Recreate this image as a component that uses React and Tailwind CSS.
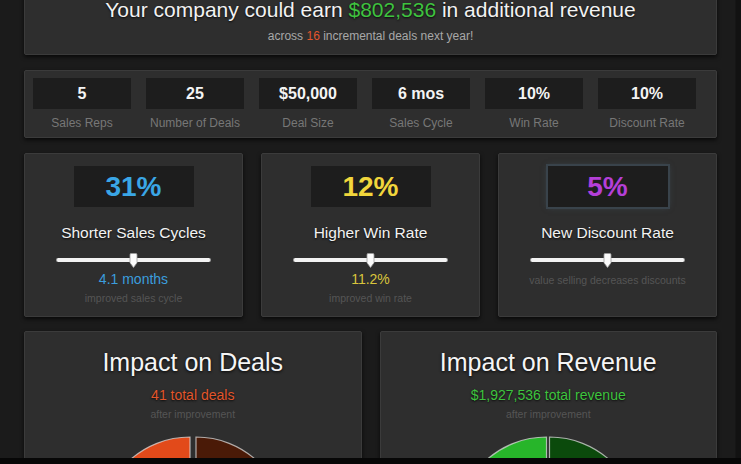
import React from "react";

const stats = [
  ["5", "Sales Reps"],
  ["25", "Number of Deals"],
  ["$50,000", "Deal Size"],
  ["6 mos", "Sales Cycle"],
  ["10%", "Win Rate"],
  ["10%", "Discount Rate"],
];

function Slider() {
  return (
    <div className="relative mx-auto h-[16px] w-[155px]">
      <div className="absolute left-0 right-0 top-[6px] h-[4px] rounded-full border-x border-[#9a9a9a] bg-[#f3f3f3]" />
      <svg
        className="absolute left-[73px] top-[1px]"
        width="9"
        height="16"
        viewBox="0 0 9 16"
      >
        <path
          d="M1 1.6 Q1 0.5 2.1 0.5 H6.9 Q8 0.5 8 1.6 V9.8 L4.5 14.6 L1 9.8 Z"
          fill="#fbfbfb"
          stroke="#9c9c9c"
          strokeWidth="0.8"
        />
      </svg>
    </div>
  );
}

function MetricCard({ value, valueColor, title, sub, subColor, note, focused }) {
  return (
    <div className="flex h-[164px] flex-col items-center rounded-[2px] border border-[#3b3b3b] bg-[#2e2e2e] pt-[12px] shadow-[0_2px_4px_rgba(0,0,0,0.7)]">
      <div
        className={
          "flex h-[41px] w-[120px] items-center justify-center bg-[#1d1d1d] " +
          (focused ? "ring-2 ring-[#39434b] shadow-[0_0_6px_rgba(80,110,130,0.5)]" : "")
        }
      >
        <span className={"text-[28px] font-bold leading-none " + valueColor}>{value}</span>
      </div>
      <div className="mt-[17px] text-[15.5px] leading-[18px] text-[#f2f2f2] [text-shadow:0_1px_2px_rgba(0,0,0,0.8)]">
        {title}
      </div>
      <div className="mt-[10px] w-full">
        <Slider />
      </div>
      {sub ? (
        <>
          <div className={"mt-[3px] text-[14px] leading-[16px] " + subColor}>{sub}</div>
          <div className="mt-[5px] text-[10.5px] leading-[12px] text-[#555555]">{note}</div>
        </>
      ) : (
        <div className="mt-[5px] text-[10.5px] leading-[14px] text-[#555555]">{note}</div>
      )}
    </div>
  );
}

function Pie({ leftFill, rightFill, gap }) {
  const r = 90;
  return (
    <svg width="190" height="190" viewBox="-95 -95 190 190" className="mx-auto block">
      <path
        d={`M ${-gap} 0 L ${-gap} ${-r} A ${r} ${r} 0 0 0 ${-gap} ${r} Z`}
        fill={leftFill}
        stroke="#d9d9d9"
        strokeOpacity="0.75"
        strokeWidth="1.2"
      />
      <path
        d={`M ${gap} 0 L ${gap} ${-r} A ${r} ${r} 0 0 1 ${gap} ${r} Z`}
        fill={rightFill}
        stroke="#d9d9d9"
        strokeOpacity="0.75"
        strokeWidth="1.2"
      />
    </svg>
  );
}

function ImpactCard({ title, total, totalColor, leftFill, rightFill, gap }) {
  return (
    <div className="flex h-[200px] flex-col items-center rounded-[2px] border border-[#3b3b3b] bg-[#2e2e2e] pt-[15px] shadow-[0_2px_4px_rgba(0,0,0,0.7)]">
      <div className="text-[25px] leading-[30px] text-[#f5f5f5] [text-shadow:0_1px_3px_rgba(0,0,0,0.9)]">
        {title}
      </div>
      <div className={"mt-[9px] text-[14px] leading-[18px] [text-shadow:0_1px_2px_rgba(0,0,0,0.8)] " + totalColor}>
        {total}
      </div>
      <div className="mt-[4px] text-[10.5px] leading-[12px] text-[#555555]">after improvement</div>
      <div className="mt-[12px] w-full">
        <Pie leftFill={leftFill} rightFill={rightFill} gap={gap} />
      </div>
    </div>
  );
}

export default function App() {
  return (
    <div className="flex h-[464px] w-full flex-col overflow-hidden bg-[#1b1b1b] font-['Liberation_Sans',Arial,sans-serif]">
      <div className="flex min-h-0 flex-1 overflow-hidden">
        <div className="flex w-[735px] shrink-0 flex-col gap-[15px] pl-[24px] pr-[18px]">
          {/* headline */}
          <div className="-mt-[10px] flex flex-col items-center rounded-[2px] border border-[#3b3b3b] bg-[#2e2e2e] pb-[11px] pt-[9px] shadow-[0_2px_4px_rgba(0,0,0,0.7)]">
            <div className="text-[21px] leading-[20px] text-[#f2f2f2] [text-shadow:0_1px_2px_rgba(0,0,0,0.8)]">
              Your company could earn <span className="text-[#3fc23f]">$802,536</span> in additional revenue
            </div>
            <div className="mt-[9px] text-[12px] leading-[14px] text-[#a8a8a8]">
              across <span className="text-[#e2552d]">16</span> incremental deals next year!
            </div>
          </div>

          {/* inputs */}
          <div className="flex gap-[15px] rounded-[2px] border border-[#3b3b3b] bg-[#2e2e2e] pb-[7px] pl-[8px] pt-[7px] shadow-[0_2px_4px_rgba(0,0,0,0.7)]">
            {stats.map(([v, l], i) => (
              <div key={i} className="flex w-[98px] flex-col items-center">
                <div className="flex h-[31px] w-full items-center justify-center bg-[#1d1d1d] text-[16px] font-bold text-[#f4f4f4]">
                  {v}
                </div>
                <div className="mt-[7px] text-[12px] leading-[14px] text-[#777777]">{l}</div>
              </div>
            ))}
          </div>

          {/* improvements */}
          <div className="grid grid-cols-3 gap-[18px]">
            <MetricCard
              value="31%"
              valueColor="text-[#3aa6e6]"
              title="Shorter Sales Cycles"
              sub="4.1 months"
              subColor="text-[#3b9ddd]"
              note="improved sales cycle"
            />
            <MetricCard
              value="12%"
              valueColor="text-[#f1d63c]"
              title="Higher Win Rate"
              sub="11.2%"
              subColor="text-[#d9c53c]"
              note="improved win rate"
            />
            <MetricCard
              value="5%"
              valueColor="text-[#b43fd8]"
              title="New Discount Rate"
              note="value selling decreases discounts"
              focused
            />
          </div>

          {/* impact charts */}
          <div className="-mt-px grid grid-cols-2 gap-[18px]">
            <ImpactCard
              title="Impact on Deals"
              total="41 total deals"
              totalColor="text-[#e2562b]"
              leftFill="#e24a1a"
              rightFill="#4a1a07"
              gap={3}
            />
            <ImpactCard
              title="Impact on Revenue"
              total="$1,927,536 total revenue"
              totalColor="text-[#3ec43e]"
              leftFill="#27b52a"
              rightFill="#0b4a0c"
              gap={1.5}
            />
          </div>
        </div>
        <div className="flex-1 border-l border-[#161616] bg-[#121212]" />
      </div>
      <div className="h-[6px] shrink-0 bg-[#070707]" />
    </div>
  );
}
